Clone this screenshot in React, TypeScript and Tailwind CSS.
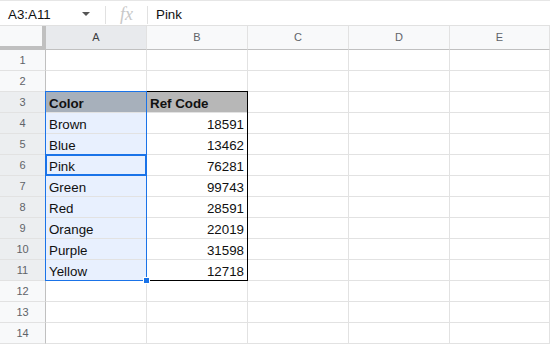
import React from 'react';

const cols = ['A', 'B', 'C', 'D', 'E'];

const data: { [row: number]: [string, string] } = {
    3: ['Color', 'Ref Code'],
    4: ['Brown', '18591'],
    5: ['Blue', '13462'],
    6: ['Pink', '76281'],
    7: ['Green', '99743'],
    8: ['Red', '28591'],
    9: ['Orange', '22019'],
    10: ['Purple', '31598'],
    11: ['Yellow', '12718'],
};

const rows = Array.from({ length: 14 }, (_, i) => i + 1);

const App: React.FC = () => {
    const inRange = (r: number) => r >= 3 && r <= 11;

    return (
        <div className="w-[550px] h-[349px] overflow-hidden bg-white text-[13.33px] text-[#111]" style={{ fontFamily: '"Liberation Sans", Arial, sans-serif' }}>
            {/* formula bar */}
            <div className="flex items-center h-[26px] pt-[3px] border-t border-t-[#e6e6e6] border-b border-b-[#e1e1e1]">
                <div className="w-[105px] flex items-center pl-2 pr-2">
                    <span className="flex-1">A3:A11</span>
                    <span className="w-0 h-0 border-l-[4px] border-r-[4px] border-t-[4px] border-l-transparent border-r-transparent border-t-[#555] mr-[7px]" />
                </div>
                <div className="w-px h-[18px] bg-[#e1e1e1]" />
                <div className="w-[41px] flex justify-center text-[#c8c8c8] text-[18px] italic" style={{ fontFamily: '"Liberation Serif", serif' }}>fx</div>
                <div className="w-px h-[18px] bg-[#e1e1e1]" />
                <span className="pl-2">Pink</span>
            </div>

            {/* grid */}
            <div className="relative">
                <div className="grid grid-cols-[46px_101px_101px_101px_101px_100px]">
                    <div className="h-[24px] bg-[#f8f9fa] border-r-[4px] border-b-[4px] border-[#c0c0c0]" />
                    {cols.map(c => (
                        <div
                            key={c}
                            className={`h-[24px] flex items-center justify-center text-[11px] border-r border-r-[#e2e2e2] border-b border-b-[#c0c0c0] ${c === 'A' ? 'bg-[#e8eaed] text-[#3c4043]' : 'bg-[#f8f9fa] text-[#5f6368]'}`}
                        >
                            {c}
                        </div>
                    ))}
                    {rows.map(r => (
                        <React.Fragment key={r}>
                            <div className={`h-[21px] flex items-center justify-center text-[11px] text-[#5f6368] border-r border-r-[#c0c0c0] border-b border-b-[#e2e2e2] ${inRange(r) ? 'bg-[#eceef0]' : 'bg-[#f8f9fa]'}`}>
                                {r}
                            </div>
                            {cols.map(c => {
                                const val = data[r];
                                let cls = 'bg-white';
                                let text = '';
                                let align = 'justify-start';
                                if (val && c === 'A') {
                                    text = val[0];
                                    cls = r === 3 ? 'bg-[#a7b0bb] font-bold' : 'bg-[#e8f0fe]';
                                }
                                if (val && c === 'B') {
                                    text = val[1];
                                    if (r === 3) {
                                        cls = 'bg-[#b7b7b7] font-bold';
                                    } else {
                                        align = 'justify-end';
                                    }
                                }
                                return (
                                    <div
                                        key={c}
                                        className={`h-[21px] flex items-end px-[3px] leading-[17px] border-r border-r-[#e2e2e2] border-b border-b-[#e2e2e2] ${align} ${cls}`}
                                    >
                                        {text}
                                    </div>
                                );
                            })}
                        </React.Fragment>
                    ))}
                </div>

                {/* table border around A3:B11 */}
                <div className="absolute left-[45px] top-[65px] w-[203px] h-[190px] border border-black pointer-events-none" />
                {/* selection A3:A11 */}
                <div className="absolute left-[45px] top-[65px] w-[102px] h-[190px] border border-[#1a73e8] pointer-events-none" />
                {/* active cell A6 */}
                <div className="absolute left-[45px] top-[128px] w-[102px] h-[22px] border-2 border-[#1a73e8] pointer-events-none" />
                {/* fill handle */}
                <div className="absolute left-[143px] top-[251px] w-[7px] h-[7px] bg-[#1a73e8] border border-white pointer-events-none" />
            </div>
        </div>
    );
};

export default App;
